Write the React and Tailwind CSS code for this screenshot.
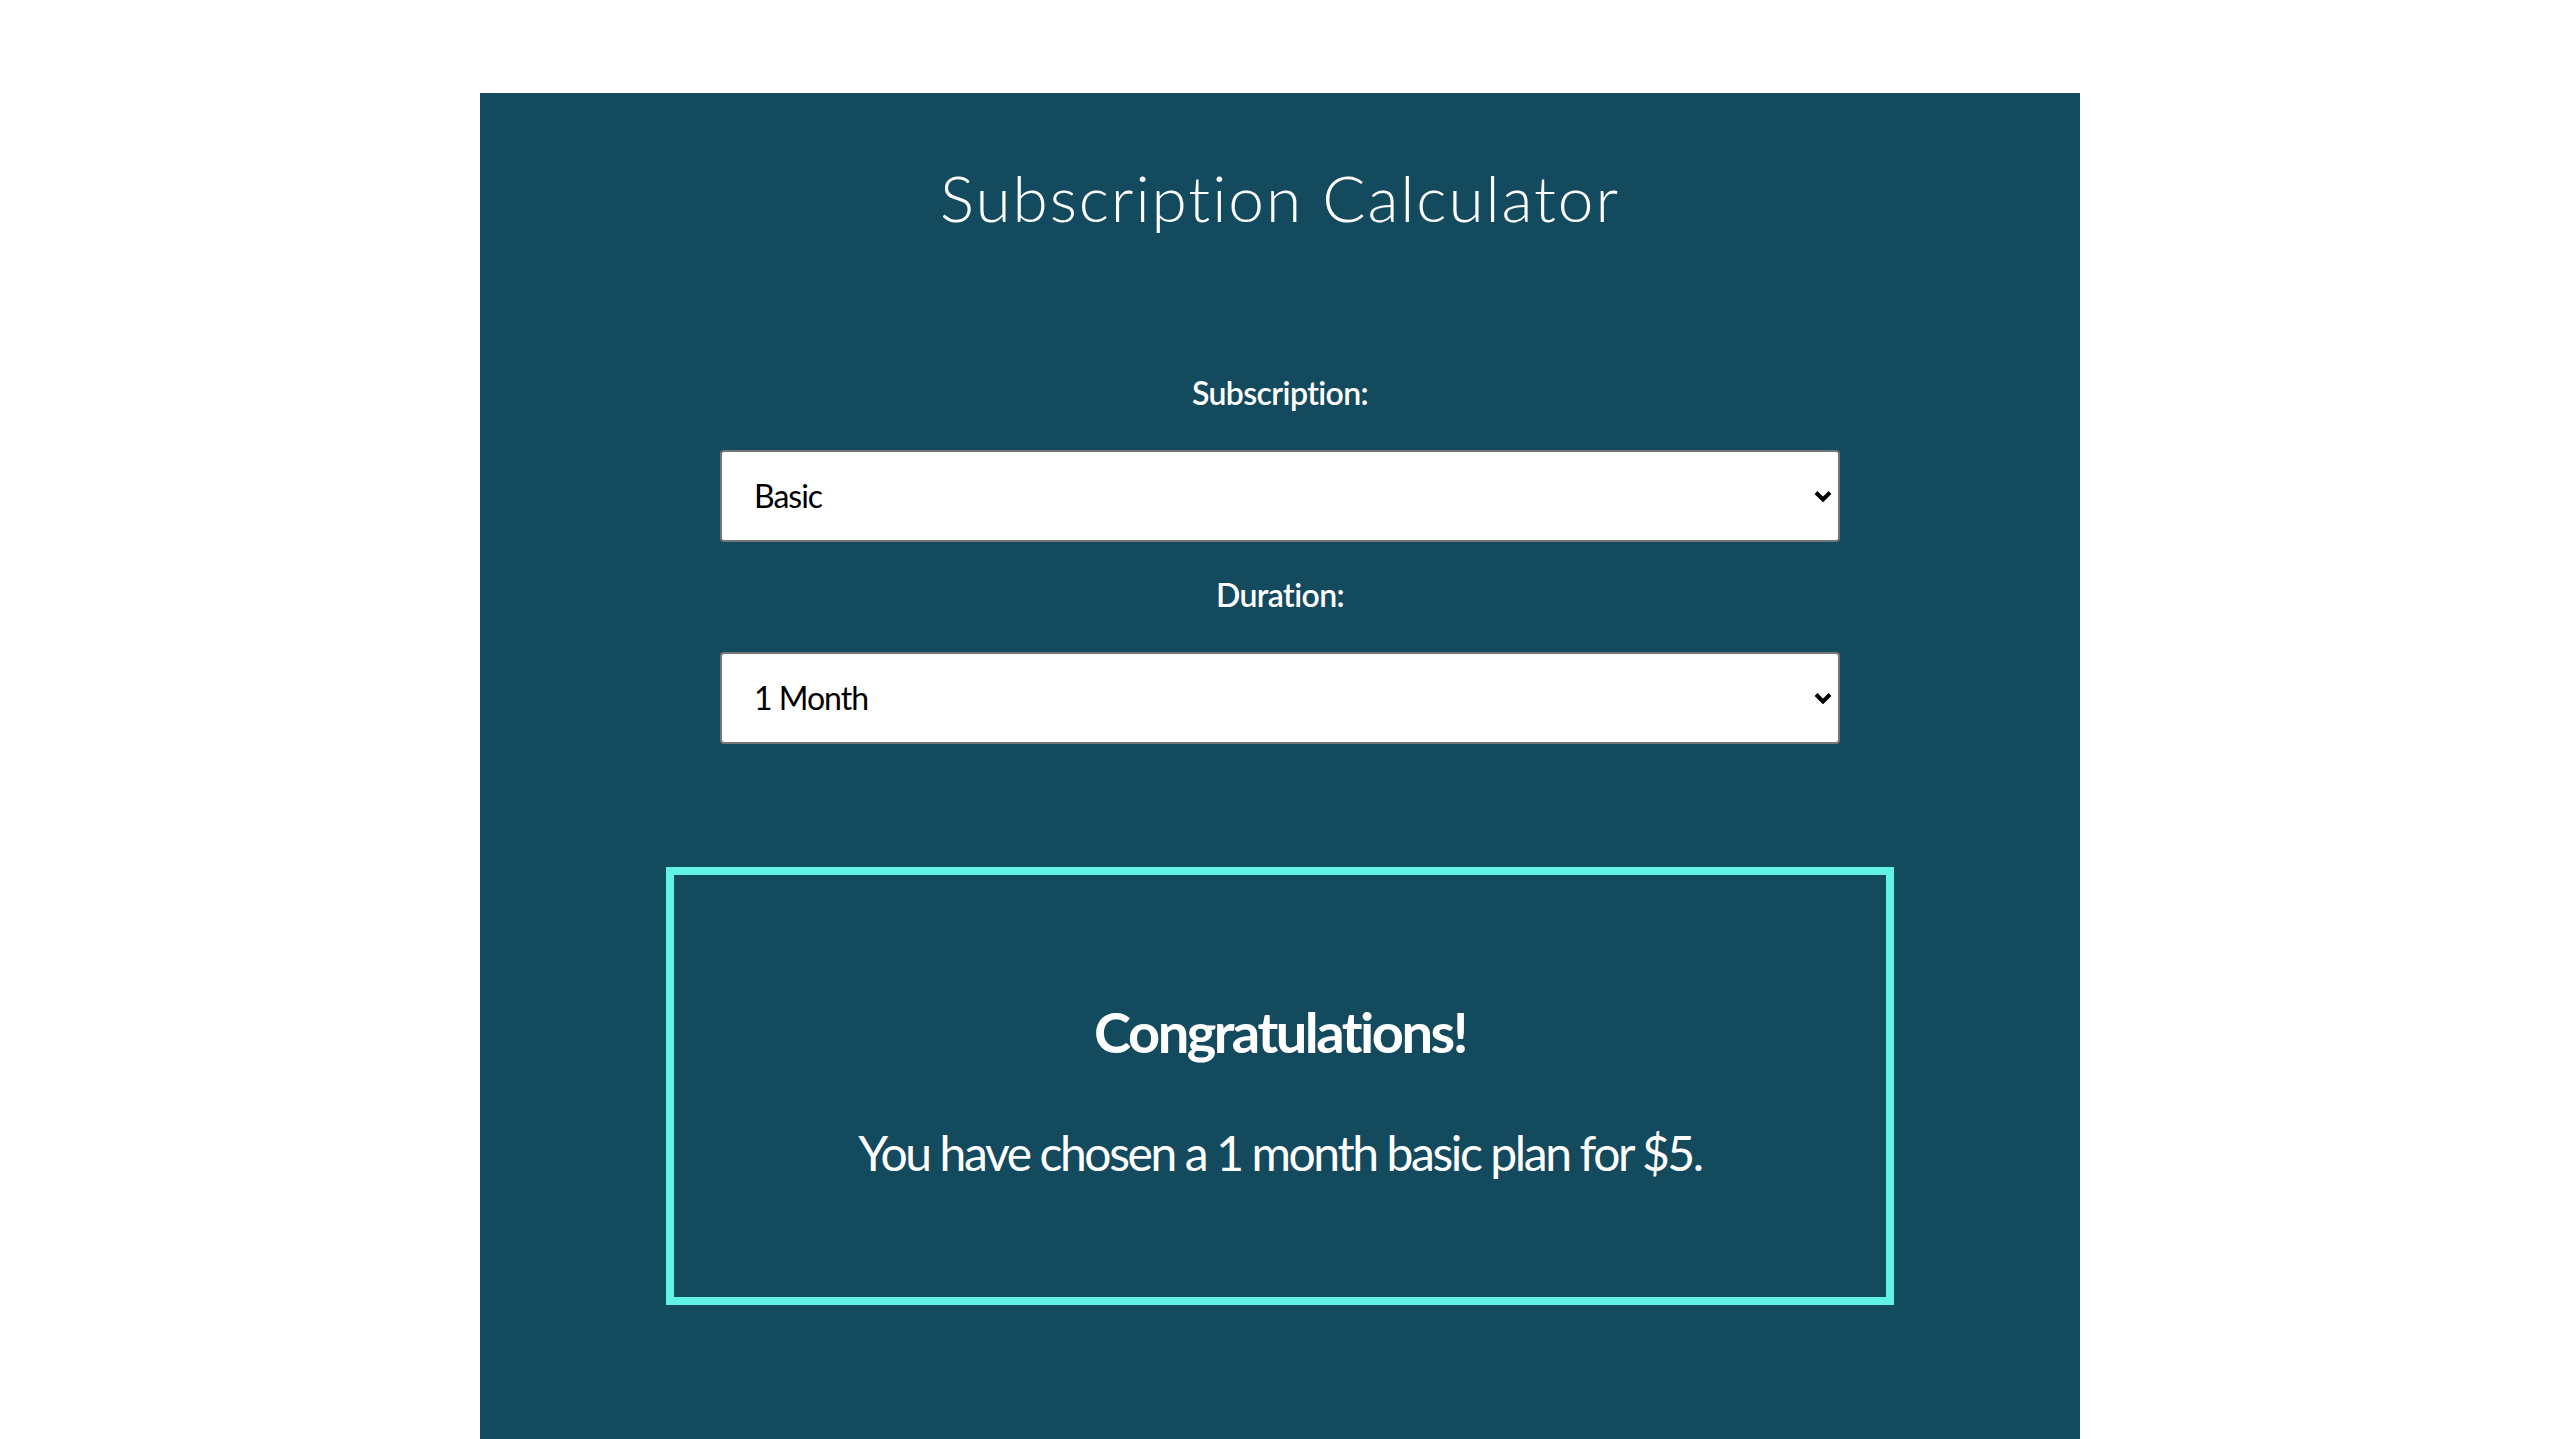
import { useState } from 'react'

const PRICES = { basic: 5, standard: 10, premium: 15 }

const Chevron = () => (
  <svg
    className="pointer-events-none absolute right-[8px] top-1/2 -translate-y-1/2"
    width="18"
    height="12"
    viewBox="0 0 18 12"
    fill="none"
  >
    <polyline points="2,2.5 9,9.5 16,2.5" stroke="#000" strokeWidth="4" />
  </svg>
)

const Field = ({ label, value, onChange, options, first }) => (
  <div className={first ? 'mt-[135px]' : 'mt-[33px]'}>
    <label className="block text-center text-[32px] leading-[40px] font-semibold tracking-[-0.6px] text-white">
      {label}
    </label>
    <div className="relative mx-auto mt-[37px] w-[1120px]">
      <select
        value={value}
        onChange={(e) => onChange(e.target.value)}
        className="block h-[92px] w-full appearance-none rounded-[4px] border-2 border-[#767676] bg-white pl-[32px] text-[32px] tracking-[-1px] text-black outline-none"
      >
        {options.map((o) => (
          <option key={o.value} value={o.value}>
            {o.label}
          </option>
        ))}
      </select>
      <Chevron />
    </div>
  </div>
)

export default function App() {
  const [plan, setPlan] = useState('basic')
  const [months, setMonths] = useState('1')

  const total = PRICES[plan] * Number(months)

  return (
    <div className="min-h-screen bg-white font-['Lato','Liberation_Sans',sans-serif]">
      <div className="mx-auto mt-[93px] min-h-[1400px] w-[1600px] bg-[#134a5e] pt-[65px]">
        <h1 className="text-center text-[64px] leading-[80px] font-light tracking-[1.9px] text-white">
          Subscription Calculator
        </h1>

        <Field
          first
          label="Subscription:"
          value={plan}
          onChange={setPlan}
          options={[
            { value: 'basic', label: 'Basic' },
            { value: 'standard', label: 'Standard' },
            { value: 'premium', label: 'Premium' },
          ]}
        />
        <Field
          label="Duration:"
          value={months}
          onChange={setMonths}
          options={[
            { value: '1', label: '1 Month' },
            { value: '6', label: '6 Months' },
            { value: '12', label: '12 Months' },
          ]}
        />

        <div className="mx-auto mt-[123px] h-[438px] w-[1228px] border-8 border-[#61f3e3] pt-[123px] text-center text-white">
          <h2 className="text-[56px] leading-[68px] font-bold tracking-[-2.5px]">Congratulations!</h2>
          <p className="mt-[58px] text-[48px] leading-[58px] tracking-[-2.4px]">
            You have chosen a {months} month {plan} plan for ${total}.
          </p>
        </div>
      </div>
    </div>
  )
}
